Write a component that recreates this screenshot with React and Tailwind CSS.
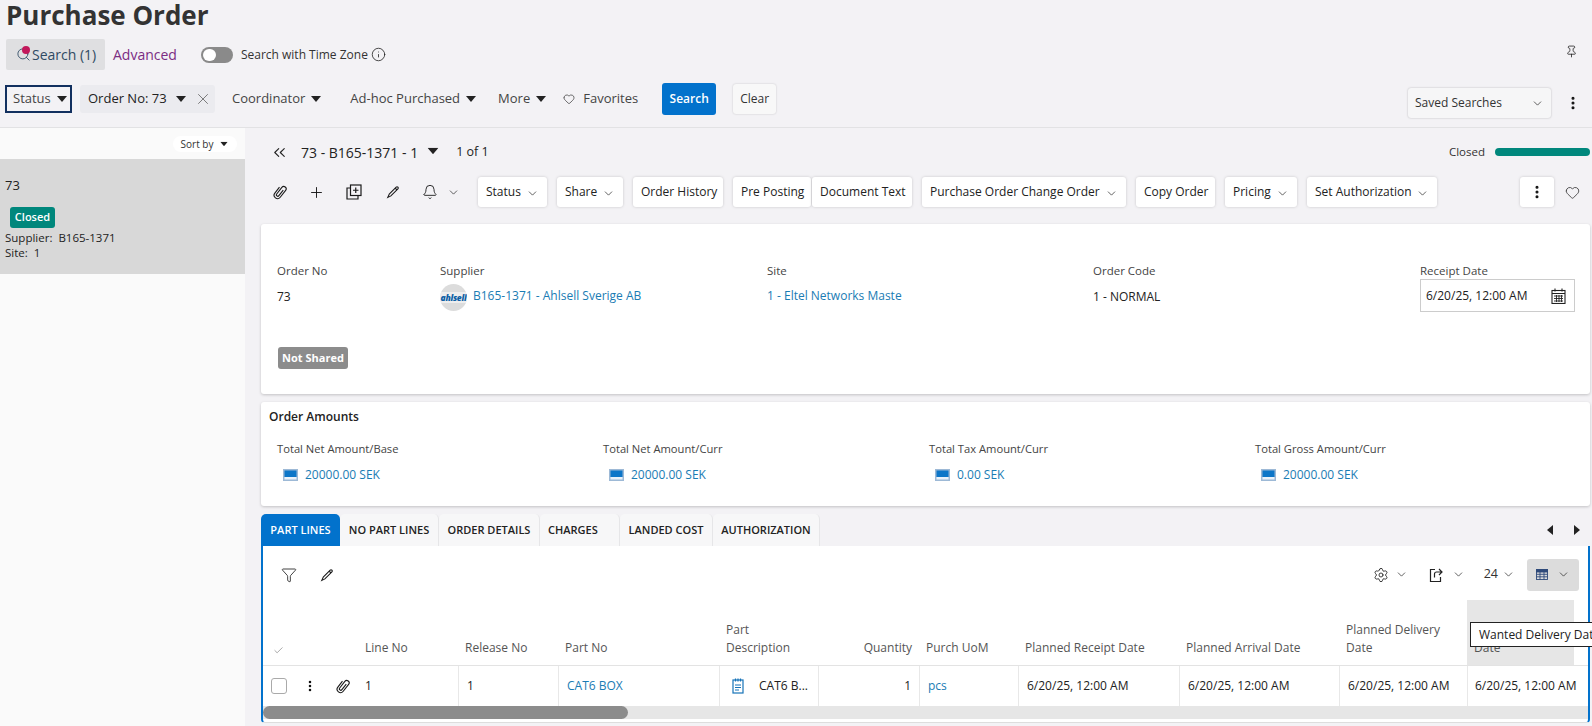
import React from "react";
import { Plus, Bell, ChevronDown, ChevronsLeft, Heart, Filter, Settings, Info, Pin, X, Check, EllipsisVertical, Search as SearchIcon } from "lucide-react";

const Caret = ({ className = "" }) => (
  <svg width="10" height="6" viewBox="0 0 10 6" className={className}><path d="M0 0h10L5 6z" fill="#222" /></svg>
);
const Chev = ({ className = "" }) => <ChevronDown size={13} strokeWidth={1.3} className={`text-[#222] ${className}`} />;

const Clip = ({ className = "" }) => (
  <svg width="16" height="16" viewBox="0 0 16 16" fill="none" stroke="#1a1a1a" strokeWidth="1.1" className={className}>
    <g transform="rotate(38 8 8)">
      <path d="M4.6 4.5V12a3.4 3.4 0 0 0 6.8 0V3.2a2.4 2.4 0 0 0-4.8 0V11.6a1.4 1.4 0 0 0 2.8 0V4.5" />
    </g>
  </svg>
);
const PencilIcon = ({ className = "", size = 14 }) => (
  <svg width={size} height={size} viewBox="0 0 14 14" fill="none" stroke="#1a1a1a" strokeWidth="1.1" className={className}>
    <path d="M3.2 9.2 10.2 2.2a1.2 1.2 0 0 1 1.7 0 1.2 1.2 0 0 1 0 1.7L4.9 10.9 1.8 12.4z" />
    <path d="M9.2 3.2l1.8 1.8" />
  </svg>
);
const StackPlus = ({ className = "" }) => (
  <svg width="16" height="16" viewBox="0 0 16 16" fill="none" stroke="#1a1a1a" strokeWidth="1.2" className={className}>
    <rect x="4.5" y="1" width="10.5" height="10.5" />
    <path d="M4.5 4H1v11h11v-3.5" />
    <path d="M9.75 3.5v5.5M7 6.25h5.5" />
  </svg>
);

const Btn = ({ children, w, chev }) => (
  <button className={`h-[30px] ${w} shrink-0 flex items-center justify-between px-[8px] bg-white rounded-[3px] shadow-[0_0_3px_rgba(0,0,0,0.18)] text-[12px] text-[#222] whitespace-nowrap`}>
    <span>{children}</span>
    {chev && <Chev className="mt-[2px]" />}
  </button>
);

const MoneyIcon = () => (
  <svg width="15" height="12" viewBox="0 0 15 12" className="shrink-0">
    <rect width="15" height="12" fill="#9db9d6" />
    <rect x="1.5" y="1.5" width="12" height="6.5" fill="#0d76c8" />
    <rect x="1.5" y="8" width="12" height="2.5" fill="#eaf2fa" />
  </svg>
);

const Amount = ({ label, value }) => (
  <div>
    <div className="text-[11.2px] text-[#444] leading-[16px]">{label}</div>
    <div className="flex items-center gap-[7px] ml-[6px] mt-[10px] text-[12px] text-[#1a7cb4] leading-[16px]">
      <MoneyIcon />
      <span>{value}</span>
    </div>
  </div>
);

const Tab = ({ children, w, active }) => (
  <div className={`${w} h-[32px] flex items-center px-[6px] text-[11px] font-semibold whitespace-nowrap rounded-t-[5px] ${active ? "bg-[#0272cc] text-white" : "bg-[#f7f7f8] text-[#222] border-r border-[#e6e6e8]"}`}>
    {children}
  </div>
);

const cols = "grid grid-cols-[195px_100px_161px_99px_101px_99px_161px_160px_128px_107px]";

const Head = ({ children, className = "" }) => (
  <div className={`self-end pb-[8px] px-[7px] text-[12px] leading-[18px] text-[#555] whitespace-nowrap ${className}`}>{children}</div>
);
const Cell = ({ children, className = "text-[#222]" }) => (
  <div className={`flex items-center px-[8px] border-l border-[#e8e8e8] text-[12px] whitespace-nowrap overflow-hidden ${className}`}>{children}</div>
);

export default function App() {
  return (
    <div className="h-[726px] w-[1592px] overflow-hidden bg-[#f3f2f5] flex flex-col font-['Open_Sans','Noto_Sans',sans-serif] text-[#222]">
      <h1 className="h-[39px] pl-[6px] text-[26px] leading-[30px] font-bold text-[#333]">Purchase Order</h1>

      <div className="h-[31px] flex items-center pl-[6px]">
        <div className="relative h-[31px] w-[99px] bg-[#dfdfe1] rounded-[2px] flex items-center pl-[10px] gap-[1px] text-[14px] text-[#2f4a63]">
          <SearchIcon size={15} strokeWidth={1.4} className="text-[#2f4a63]" />
          <span className="absolute left-[16px] top-[7px] w-[8px] h-[8px] rounded-full bg-[#c2185b]" />
          <span>Search (1)</span>
        </div>
        <span className="ml-[8px] text-[14px] text-[#7b2d83]">Advanced</span>
        <div className="ml-[24px] w-[32px] h-[16px] rounded-full bg-[#8a8a8a] p-[2px]">
          <div className="w-[13px] h-[12px] rounded-full bg-white" />
        </div>
        <span className="ml-[8px] text-[12px] text-[#333]">Search with Time Zone</span>
        <Info size={15} strokeWidth={1.3} className="ml-[3px] text-[#222]" />
        <Pin size={13} strokeWidth={1.5} className="ml-auto mr-[14px] -mt-[6px] text-[#222]" />
      </div>

      <div className="mt-[13px] h-[32px] flex items-center pl-[5px] pr-[11px] text-[13px] text-[#444]">
        <div className="h-[28px] w-[67px] border-2 border-[#12305f] flex items-center pl-[6px] gap-[6px] bg-[#f3f2f5]">
          <span>Status</span><Caret />
        </div>
        <div className="ml-[8px] h-[28px] w-[135px] rounded-[3px] bg-[#ebebef] flex items-center pl-[8px] text-[#222]">
          <span>Order No: 73</span><Caret className="ml-[9px]" />
          <X size={18} strokeWidth={1} className="ml-[8px] text-[#555]" />
        </div>
        <span className="ml-[17px]">Coordinator</span><Caret className="ml-[6px]" />
        <span className="ml-[29px]">Ad-hoc Purchased</span><Caret className="ml-[6px]" />
        <span className="ml-[22px]">More</span><Caret className="ml-[6px]" />
        <Heart size={12} strokeWidth={1.3} className="ml-[17px] text-[#222]" />
        <span className="ml-[8px]">Favorites</span>
        <button className="ml-[24px] h-[32px] w-[54px] rounded-[3px] bg-[#0272cc] text-white text-[12px] font-semibold">Search</button>
        <button className="ml-[17px] h-[30px] w-[43px] rounded-[3px] bg-[#f8f8f8] shadow-[0_0_2px_rgba(0,0,0,0.2)] text-[12px] text-[#333]">Clear</button>
        <div className="ml-auto h-[30px] w-[143px] mt-[8px] rounded-[3px] bg-[#f6f6f7] shadow-[0_0_2px_rgba(0,0,0,0.25)] flex items-center justify-between px-[7px] text-[12px] text-[#333]">
          <span>Saved Searches</span><Chev />
        </div>
        <EllipsisVertical size={16} strokeWidth={2.6} className="ml-[14px] mt-[8px] text-[#111]" />
      </div>

      <div className="mt-[12px] flex-1 flex border-t border-[#e2e2e4] min-h-0">
        <aside className="w-[245px] shrink-0 bg-[#fafafa]">
          <div className="h-[31px] flex items-start justify-end pr-[8px] pt-[8px]">
            <div className="h-[16px] w-[64px] bg-white rounded-full flex items-center justify-center gap-[6px] text-[10px] text-[#333]">
              <span>Sort by</span><Caret className="scale-75" />
            </div>
          </div>
          <div className="h-[115px] bg-[#d8d8d8] pl-[5px] pt-[17px]">
            <div className="text-[13px] leading-[18px] text-[#222]">73</div>
            <div className="mt-[13px] ml-[5px] w-[45px] h-[21px] rounded-[3px] bg-[#00877c] text-white text-[11px] font-semibold flex items-center justify-center">Closed</div>
            <div className="mt-[2px] text-[11.5px] leading-[15px] text-[#222]">
              <div>Supplier:&nbsp; B165-1371</div>
              <div>Site:&nbsp; 1</div>
            </div>
          </div>
        </aside>

        <main className="flex-1 min-w-0 pl-[16px] pr-[2px] flex flex-col">
          <div className="mt-[12px] h-[24px] flex items-center text-[14px]">
            <ChevronsLeft size={19} strokeWidth={1.4} className="ml-[9px] text-[#222]" />
            <span className="ml-[12px]">73 - B165-1371 - 1</span>
            <Caret className="ml-[10px] scale-110 -mt-[2px]" />
            <span className="ml-[18px] text-[12.5px]">1 of 1</span>
            <span className="ml-auto text-[11.5px] text-[#333]">Closed</span>
            <div className="ml-[10px] w-[95px] h-[8px] rounded-full bg-[#00877c]" />
          </div>

          <div className="mt-[13px] h-[30px] flex items-center">
            <Clip className="ml-[11px]" />
            <Plus size={17} strokeWidth={1.3} className="ml-[20px] text-[#111]" />
            <StackPlus className="ml-[21px]" />
            <PencilIcon className="ml-[24px]" />
            <Bell size={16} strokeWidth={1.3} className="ml-[22px] text-[#111]" />
            <Chev className="ml-[9px] mr-[18px]" />
            <div className="flex gap-[10px]">
              <Btn w="w-[69px]" chev>Status</Btn>
              <Btn w="w-[66px]" chev>Share</Btn>
              <Btn w="w-[90px]">Order History</Btn>
              <div className="flex gap-px">
                <Btn w="w-[78px]">Pre Posting</Btn>
                <Btn w="w-[100px]">Document Text</Btn>
              </div>
              <Btn w="w-[204px]" chev>Purchase Order Change Order</Btn>
              <Btn w="w-[79px]">Copy Order</Btn>
              <Btn w="w-[72px]" chev>Pricing</Btn>
              <Btn w="w-[130px]" chev>Set Authorization</Btn>
            </div>
            <button className="ml-[83px] h-[30px] w-[34px] bg-white rounded-[3px] shadow-[0_0_3px_rgba(0,0,0,0.18)] flex items-center justify-center">
              <EllipsisVertical size={16} strokeWidth={2.6} className="text-[#111]" />
            </button>
            <Heart size={15} strokeWidth={1.2} className="ml-[11px] text-[#222]" />
          </div>

          <section className="mt-[17px] h-[170px] bg-white rounded-[3px] shadow-[0_1px_3px_rgba(0,0,0,0.2)] pl-[16px] pt-[38px]">
            <div className="grid grid-cols-[163px_327px_326px_327px_1fr] text-[11.5px] text-[#444] leading-[18px]">
              <div>
                <div>Order No</div>
                <div className="mt-[8px] text-[12px] text-[#222]">73</div>
              </div>
              <div>
                <div>Supplier</div>
                <div className="flex items-start gap-[6px] mt-[4px]">
                  <div className="w-[27px] h-[27px] rounded-full bg-[#dcdcdc] flex items-center overflow-hidden">
                    <span className="w-full text-center leading-[11px] bg-white/50 text-[8.5px] font-extrabold italic tracking-[-0.3px] text-[#0b5fa5]">ahlsell</span>
                  </div>
                  <span className="mt-[3px] text-[12px] text-[#1a7cb4]">B165-1371 - Ahlsell Sverige AB</span>
                </div>
              </div>
              <div>
                <div>Site</div>
                <div className="mt-[7px] text-[12px] text-[#1a7cb4]">1 - Eltel Networks Maste</div>
              </div>
              <div>
                <div>Order Code</div>
                <div className="mt-[8px] text-[12px] text-[#222]">1 - NORMAL</div>
              </div>
              <div>
                <div>Receipt Date</div>
                <div className="mt-[-1px] w-[155px] h-[33px] border border-[#ccc] flex items-center justify-between pl-[5px] pr-[8px] text-[12px] text-[#222]">
                  <span>6/20/25, 12:00 AM</span>
                  <svg width="15" height="16" viewBox="0 0 15 16" fill="none" stroke="#222" strokeWidth="1.1">
                    <rect x="1" y="2.5" width="13" height="13" />
                    <path d="M1 5.5h13M4 0.5v3M11 0.5v3" />
                    <path d="M3 8h9M3 10.5h9M3 13h9M5.5 7v7M8 7v7M10.5 7v7" strokeWidth="0.9" />
                  </svg>
                </div>
              </div>
            </div>
            <div className="mt-[35px] w-[70px] h-[22px] ml-px rounded-[3px] bg-[#8c8c8c] text-white text-[11px] font-bold flex items-center justify-center">Not Shared</div>
          </section>

          <section className="mt-[8px] h-[104px] bg-white rounded-[3px] shadow-[0_1px_3px_rgba(0,0,0,0.2)] pl-[8px] pt-[7px]">
            <div className="text-[12px] font-semibold leading-[16px] text-[#222]">Order Amounts</div>
            <div className="mt-[16px] ml-[8px] grid grid-cols-[326px_326px_326px_326px]">
              <Amount label="Total Net Amount/Base" value="20000.00 SEK" />
              <Amount label="Total Net Amount/Curr" value="20000.00 SEK" />
              <Amount label="Total Tax Amount/Curr" value="0.00 SEK" />
              <Amount label="Total Gross Amount/Curr" value="20000.00 SEK" />
            </div>
          </section>

          <div className="mt-[8px] h-[32px] flex items-center">
            <Tab w="w-[79px] justify-center" active>PART LINES</Tab>
            <Tab w="w-[99px] justify-center">NO PART LINES</Tab>
            <Tab w="w-[101px] justify-center">ORDER DETAILS</Tab>
            <Tab w="w-[80px] !pl-[8px]">CHARGES</Tab>
            <Tab w="w-[93px] justify-center">LANDED COST</Tab>
            <Tab w="w-[107px] justify-center">AUTHORIZATION</Tab>
            <svg width="6" height="10" viewBox="0 0 6 10" className="ml-auto"><path d="M6 0v10L0 5z" fill="#222" /></svg>
            <svg width="6" height="10" viewBox="0 0 6 10" className="ml-[21px] mr-[10px]"><path d="M0 0v10l6-5z" fill="#222" /></svg>
          </div>

          <div className="relative w-[1329px] h-[177px] bg-white border-x-2 border-b border-x-[#0272cc] border-b-[#ddd] rounded-b-[4px] flex flex-col">
            <div className="h-[54px] pt-[3px] flex items-center">
              <Filter size={16} strokeWidth={1.2} className="ml-[18px] text-[#111]" />
              <PencilIcon size={14} className="ml-[23px]" />
              <Settings size={16} strokeWidth={1.3} className="ml-auto text-[#222]" />
              <Chev className="ml-[6px]" />
              <svg width="15" height="16" viewBox="0 0 15 16" fill="none" stroke="#222" strokeWidth="1.2" className="ml-[21px]">
                <path d="M6 2.5H1.5v12h10V10" />
                <path d="M5.5 10.5V7a2 2 0 0 1 2-2H13M10 2l3 3-3 3" />
              </svg>
              <Chev className="ml-[8px]" />
              <span className="ml-[19px] text-[12.5px] text-[#333]">24</span>
              <Chev className="ml-[4px]" />
              <div className="ml-[12px] mr-[9px] w-[52px] h-[32px] rounded-[3px] bg-[#dcdcdc] flex items-center justify-center gap-[9px]">
                <svg width="12" height="11" viewBox="0 0 12 11" fill="none" stroke="#2f4a7a" strokeWidth="0.9">
                  <rect x="0.5" y="0.5" width="11" height="10" />
                  <rect x="0.5" y="0.5" width="11" height="2.5" fill="#2f4a7a" />
                  <path d="M0.5 5.3h11M0.5 7.8h11M4 3v7.5M8 3v7.5" />
                </svg>
                <Chev />
              </div>
            </div>

            <div className={`${cols} h-[66px] border-b border-[#e3e3e3]`}>
              <div className="self-end pb-[8px] pl-[10px] relative flex">
                <Check size={11} strokeWidth={1.1} className="text-[#555] mb-[1px] mt-[6px]" />
                <span className="ml-[81px] text-[12px] leading-[18px] text-[#555]">Line No</span>
              </div>
              <Head>Release No</Head>
              <Head>Part No</Head>
              <Head>Part<br />Description</Head>
              <Head className="text-right pr-[7px]">Quantity</Head>
              <Head>Purch UoM</Head>
              <Head>Planned Receipt Date</Head>
              <Head>Planned Arrival Date</Head>
              <Head>Planned Delivery<br />Date</Head>
              <Head className="bg-[#e6e6e6] h-full flex flex-col justify-end overflow-hidden"><span>Wanted Delivery</span><span>Date</span></Head>
            </div>

            <div className={`${cols} h-[40px]`}>
              <div className="flex items-center pl-[8px]">
                <div className="w-[16px] h-[16px] rounded-[3px] border border-[#aaa] bg-white" />
                <EllipsisVertical size={14} strokeWidth={2.4} className="ml-[16px] text-[#111]" />
                <Clip className="ml-[18px]" />
                <span className="ml-[14px] text-[12px]">1</span>
              </div>
              <Cell>1</Cell>
              <Cell className="text-[#1a7cb4]">CAT6 BOX</Cell>
              <Cell>
                <svg width="12" height="16" viewBox="0 0 12 16" fill="none" stroke="#1673b8" strokeWidth="1.2" className="ml-[4px] shrink-0">
                  <rect x="1" y="2" width="10" height="13" />
                  <path d="M3.5 0.5v3M6 0.5v3M8.5 0.5v3M3 7h6M3 9.5h6M3 12h4" />
                </svg>
                <span className="ml-[15px] text-[#222]">CAT6 B...</span>
              </Cell>
              <Cell className="justify-end text-[#222]">1</Cell>
              <Cell className="text-[#1a7cb4]">pcs</Cell>
              <Cell>6/20/25, 12:00 AM</Cell>
              <Cell>6/20/25, 12:00 AM</Cell>
              <Cell>6/20/25, 12:00 AM</Cell>
              <Cell className="!pr-0 !pl-[7px] !overflow-visible text-[#222]">6/20/25, 12:00 AM</Cell>
            </div>

            <div className="h-[13px] bg-[#e6e6e6]">
              <div className="h-[13px] w-[365px] rounded-full bg-[#8c8c8c]" />
            </div>

            <div className="absolute left-[1207px] top-[76px] h-[25px] w-[140px] bg-white border border-[#222] pl-[8px] flex items-center text-[12px] whitespace-nowrap text-[#222]">
              Wanted Delivery Date
            </div>
          </div>
        </main>
      </div>
    </div>
  );
}
